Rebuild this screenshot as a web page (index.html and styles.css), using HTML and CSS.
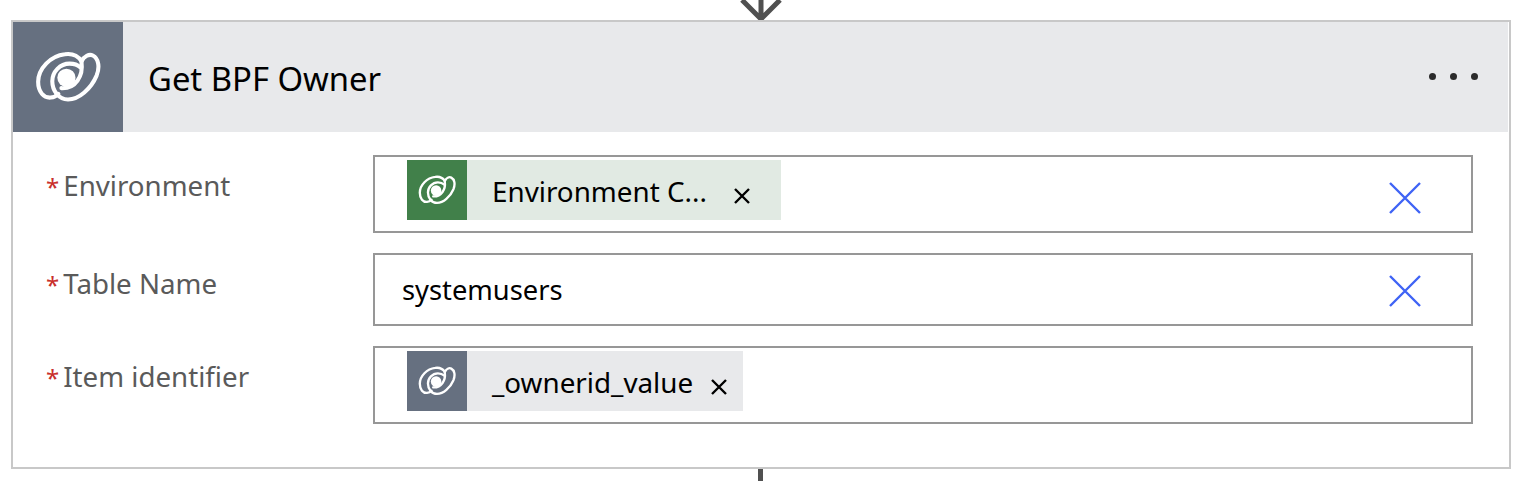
FILE: index.html
```html
<html>

<head>
    <meta name="viewport" content="width=device-width, initial-scale=1">
    <title>Get BPF Owner</title>
    <link rel="stylesheet" href="styles.css">
</head>

<body>
    <svg width="0" height="0" class="defs">
        <symbol id="dataverse" viewBox="40 30 210 165">
            <path class="logoLine" d="M188 62C176 44 156 37 135 40C90 45 50 85 50 128C50 160 68 180 90 178C100 177 108 173 114 166" />
            <path class="logoLine" d="M188 62C197 46 212 38 224 44C242 53 247 80 236 108C218 150 180 184 145 184C115 184 95 155 95 126C95 96 120 70 150 70C164 70 176 74 184 82" />
            <path class="logoLine" d="M188 66C194 108 170 150 124 148" />
            <circle class="logoFill" cx="140" cy="115" r="29" />
        </symbol>
    </svg>

    <svg class="arrowIn" width="80" height="20" viewBox="0 0 80 20">
        <path d="M40 0V17M21 0L40 19L59 0" />
    </svg>

    <div id="card">
        <div class="cardHeader">
            <div class="headerIcon"><svg width="66" height="52"><use href="#dataverse" /></svg></div>
            <h1>Get BPF Owner</h1>
            <div class="dots"><span></span><span></span><span></span></div>
        </div>

        <div class="cardBody">
            <div class="row">
                <label><span class="star">*</span>Environment</label>
                <div class="box">
                    <div class="chip chipGreen">
                        <div class="chipIcon"><svg width="38" height="30"><use href="#dataverse" /></svg></div>
                        <span class="chipText">Environment C...</span>
                        <svg class="chipClose" width="16" height="16" viewBox="0 0 16 16"><path d="M1 1L15 15M15 1L1 15" /></svg>
                    </div>
                    <svg class="clear" width="32" height="32" viewBox="0 0 32 32"><path d="M1 1L31 31M31 1L1 31" /></svg>
                </div>
            </div>

            <div class="row">
                <label><span class="star">*</span>Table Name</label>
                <div class="box boxText">
                    <span class="value">systemusers</span>
                    <svg class="clear" width="32" height="32" viewBox="0 0 32 32"><path d="M1 1L31 31M31 1L1 31" /></svg>
                </div>
            </div>

            <div class="row">
                <label><span class="star">*</span>Item identifier</label>
                <div class="box">
                    <div class="chip">
                        <div class="chipIcon"><svg width="38" height="30"><use href="#dataverse" /></svg></div>
                        <span class="chipText">_ownerid_value</span>
                        <svg class="chipClose" width="16" height="16" viewBox="0 0 16 16"><path d="M1 1L15 15M15 1L1 15" /></svg>
                    </div>
                </div>
            </div>
        </div>
    </div>

    <div class="lineOut"></div>
</body>

</html>
```

FILE: styles.css
```css
html,
body {
    height: 481px;
    overflow: hidden;
}

body {
    margin: 0;
    background-color: white;
    font-family: "Noto Sans", "Open Sans", sans-serif;
    display: flex;
    flex-direction: column;
    padding-left: 11px;
}

.defs {
    position: absolute;
}

.logoLine {
    fill: none;
    stroke: white;
    stroke-width: 13;
    stroke-linecap: round;
}

.logoFill {
    fill: white;
}

.arrowIn {
    display: block;
    margin-left: 710px;
    flex: none;
}

.arrowIn path {
    fill: none;
    stroke: #505050;
    stroke-width: 5;
}

#card {
    box-sizing: border-box;
    width: 1500px;
    height: 449px;
    border: 2px solid #c8c8c8;
    flex: none;
}

.cardHeader {
    display: flex;
    align-items: center;
    height: 110px;
    margin-right: 1px;
    background-color: #e8e9eb;
}

.headerIcon {
    width: 110px;
    height: 110px;
    background-color: #667080;
    display: flex;
    align-items: center;
    justify-content: center;
}

h1 {
    margin: 2px 0 0 25px;
    font-size: 32.8px;
    font-weight: normal;
    color: black;
}

.dots {
    margin-left: auto;
    margin-right: 30px;
    display: flex;
    gap: 14px;
    margin-top: -2px;
}

.dots span {
    width: 7px;
    height: 7px;
    border-radius: 50%;
    background-color: #2b2b2b;
}

.cardBody {
    padding: 23px 36px 0 33px;
    display: flex;
    flex-direction: column;
    gap: 20px;
}

.row {
    display: flex;
    align-items: flex-start;
}

label {
    width: 327px;
    flex: none;
    font-size: 27.7px;
    line-height: 38px;
    margin-top: 11px;
    color: #5a5a5a;
}

.star {
    color: #c9302c;
    font-size: 24px;
    margin-right: 4px;
}

.box {
    box-sizing: border-box;
    flex: 1;
    height: 78px;
    border: 2px solid #979797;
    padding: 3px 50px 0 32px;
    display: flex;
    align-items: flex-start;
}

.boxText {
    height: 73px;
    padding-top: 0;
    padding-left: 27px;
    align-items: center;
}

.value {
    font-size: 27.3px;
    color: black;
}

.clear {
    margin-left: auto;
    margin-top: 22px;
}

.boxText .clear {
    margin-top: 3px;
}

.clear path {
    stroke: #3f63f5;
    stroke-width: 2.4;
    fill: none;
}

.chip {
    height: 60px;
    display: flex;
    align-items: center;
    background-color: #e8e9eb;
    font-size: 27.8px;
    color: black;
}

.chipGreen {
    background-color: #e1eae3;
}

.chipIcon {
    width: 60px;
    height: 60px;
    background-color: #667080;
    display: flex;
    align-items: center;
    justify-content: center;
}

.chipGreen .chipIcon {
    background-color: #41804a;
}

.chipText {
    margin: 2px 0 0 25px;
}

.chipClose {
    margin: 12px 16px 0 18px;
}

.chipGreen .chipClose {
    margin-left: 27px;
    margin-right: 31px;
}

.chipClose path {
    stroke: black;
    stroke-width: 2.4;
    fill: none;
}

.lineOut {
    width: 5px;
    height: 12px;
    margin-left: 747px;
    background-color: #505050;
    flex: none;
}
```
